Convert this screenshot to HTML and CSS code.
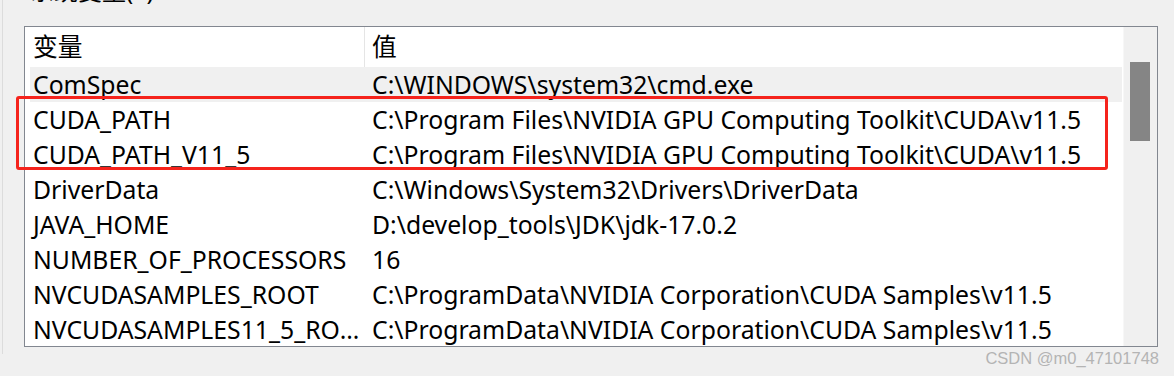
FILE: index.html
```html
<!DOCTYPE html>
<html lang="zh-CN">
<head>
  <meta charset="UTF-8" />
  <title>系统变量</title>
  <link rel="stylesheet" href="styles.css">
</head>

<body>
  <div class="group">
    <div class="group-title">系统变量(S)</div>

    <div class="listbox">
      <div class="table">
        <div class="row header">
          <div class="cell name">变量</div>
          <div class="cell value">值</div>
        </div>
        <div class="row selected">
          <div class="cell name">ComSpec</div>
          <div class="cell value">C:\WINDOWS\system32\cmd.exe</div>
        </div>
        <div class="row">
          <div class="cell name">CUDA_PATH</div>
          <div class="cell value">C:\Program Files\NVIDIA GPU Computing Toolkit\CUDA\v11.5</div>
        </div>
        <div class="row">
          <div class="cell name">CUDA_PATH_V11_5</div>
          <div class="cell value">C:\Program Files\NVIDIA GPU Computing Toolkit\CUDA\v11.5</div>
        </div>
        <div class="row">
          <div class="cell name">DriverData</div>
          <div class="cell value">C:\Windows\System32\Drivers\DriverData</div>
        </div>
        <div class="row">
          <div class="cell name">JAVA_HOME</div>
          <div class="cell value">D:\develop_tools\JDK\jdk-17.0.2</div>
        </div>
        <div class="row">
          <div class="cell name">NUMBER_OF_PROCESSORS</div>
          <div class="cell value">16</div>
        </div>
        <div class="row">
          <div class="cell name">NVCUDASAMPLES_ROOT</div>
          <div class="cell value">C:\ProgramData\NVIDIA Corporation\CUDA Samples\v11.5</div>
        </div>
        <div class="row">
          <div class="cell name">NVCUDASAMPLES11_5_ROOT</div>
          <div class="cell value">C:\ProgramData\NVIDIA Corporation\CUDA Samples\v11.5</div>
        </div>
      </div>

      <div class="scrollbar">
        <div class="thumb"></div>
      </div>
    </div>
  </div>

  <!-- annotation drawn over the list -->
  <div class="highlight"></div>
  <div class="watermark">CSDN @m0_47101748</div>
</body>
</html>
```

FILE: styles.css
```css
body {
  margin: 0;
  width: 1174px;
  height: 376px;
  overflow: hidden;
  position: relative;
  background-color: #f0f0f0;
  font-family: 'Noto Sans', 'Noto Sans CJK SC', sans-serif;
  color: #000;
}

.group {
  height: 376px;
  margin-left: 2px;
  border-left: 1px solid #dcdcdc;
  padding-left: 21px;
  box-sizing: border-box;
}

.group-title {
  height: 26px;
  margin-top: -22px;
  margin-left: 6px;
  font-size: 24px;
  line-height: 26px;
  color: #000;
}

.listbox {
  display: flex;
  margin-top: 22px;
  width: 1134px;
  height: 321px;
  border: 1px solid #828790;
  box-sizing: border-box;
  background-color: #fff;
}

.table {
  width: 1098px;
  overflow: hidden;
}

.row {
  display: flex;
  height: 35px;
  margin-left: 5px;
  margin-right: 1px;
  font-size: 24.75px;
  line-height: 35px;
  white-space: nowrap;
}

.row.header {
  height: 40px;
  line-height: 40px;
}

.row.selected {
  background-color: #f0f0f0;
}

.cell {
  overflow: hidden;
  text-overflow: ellipsis;
}

.cell.name {
  width: 335px;
  padding-left: 3px;
  box-sizing: border-box;
}

.cell.value {
  flex: 1;
  padding-left: 7px;
}

.header .cell.name {
  border-right: 1px solid #e5e5e5;
}

.scrollbar {
  width: 34px;
  background-color: #f0f0f0;
  border-left: 1px solid #f7f7f7;
  box-sizing: border-box;
  padding: 35px 7px 0 6px;
}

.thumb {
  height: 79px;
  background-color: #858585;
}

.highlight {
  position: absolute;
  left: 16px;
  top: 96px;
  width: 1092px;
  height: 74px;
  border: 3px solid #f5231c;
  border-radius: 3px;
  box-sizing: border-box;
}

.watermark {
  position: absolute;
  right: 15px;
  bottom: 8px;
  font-family: 'Liberation Sans', sans-serif;
  font-size: 16.5px;
  color: #b4b4b4;
}
```
